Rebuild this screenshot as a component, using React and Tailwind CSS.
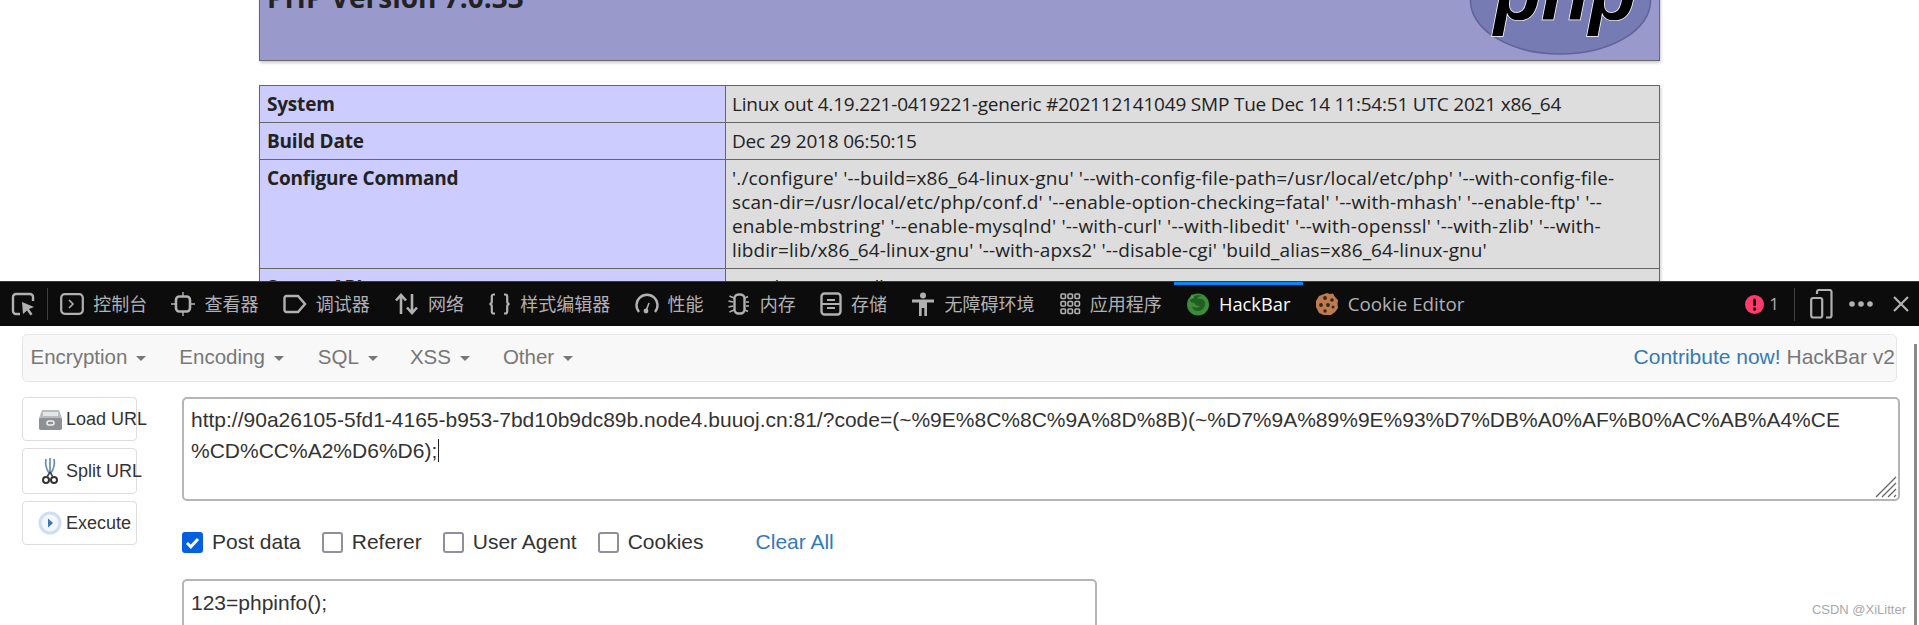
import { useState } from 'react'

const rows = [
  { k: 'System', v: [['Linux out 4.19.221-0419221-generic #202112141049 SMP Tue Dec 14 11:54:51 UTC 2021 x86_64', '']] },
  { k: 'Build Date', v: [['Dec 29 2018 06:50:15', '']] },
  {
    k: 'Configure Command',
    v: [
      ["'./configure' '--build=x86_64-linux-gnu' '--with-config-file-path=/usr/local/etc/php' '--with-config-file-", 'tracking-[0.16px]'],
      ["scan-dir=/usr/local/etc/php/conf.d' '--enable-option-checking=fatal' '--with-mhash' '--enable-ftp' '--", 'tracking-[0.13px]'],
      ["enable-mbstring' '--enable-mysqlnd' '--with-curl' '--with-libedit' '--with-openssl' '--with-zlib' '--with-", 'tracking-[0.2px]'],
      ["libdir=lib/x86_64-linux-gnu' '--with-apxs2' '--disable-cgi' 'build_alias=x86_64-linux-gnu'", 'tracking-[0.09px]'],
    ],
  },
  { k: 'Server API', v: [['Apache 2.0 Handler', '']] },
]

const Svg = ({ children, w = 24 }) => (
  <svg width={w} height="24" viewBox={`0 0 ${w} 24`} fill="none" stroke="#b1b1b3" strokeWidth="2.2" className="shrink-0">
    {children}
  </svg>
)

const tabIcons = {
  console: (
    <Svg>
      <rect x="1.2" y="2.2" width="21.6" height="19.6" rx="3.5" />
      <path d="M9 8l4 4-4 4" strokeWidth="1.6" />
    </Svg>
  ),
  inspector: (
    <Svg>
      <rect x="5" y="4.5" width="14" height="15" rx="3.5" strokeWidth="2.6" />
      <path d="M12 0v4.5M12 19.5V24M0 12h5M19 12h5" strokeWidth="1.4" />
    </Svg>
  ),
  debugger: (
    <Svg>
      <path d="M3.5 4h11.5l7 8-7 8H3.5a2 2 0 0 1-2-2V6a2 2 0 0 1 2-2z" strokeWidth="2.4" />
    </Svg>
  ),
  network: (
    <Svg w={25}>
      <path d="M7 22V3M2 8.5L7 3l5 5.5M18 2v19M13 15.5l5 5.5 5-5.5" strokeWidth="2.6" />
    </Svg>
  ),
  style: (
    <Svg w={23}>
      <path d="M7 2.5H5.8a2 2 0 0 0-2 2v5a2.5 2.5 0 0 1-2.3 2.5 2.5 2.5 0 0 1 2.3 2.5v5a2 2 0 0 0 2 2H7M16 2.5h1.2a2 2 0 0 1 2 2v5a2.5 2.5 0 0 0 2.3 2.5 2.5 2.5 0 0 0-2.3 2.5v5a2 2 0 0 1-2 2H16" strokeWidth="2.2" />
    </Svg>
  ),
  performance: (
    <Svg>
      <path d="M4 20A10.5 10.5 0 1 1 20 20" strokeWidth="2.4" />
      <circle cx="11" cy="19" r="2.4" fill="#b1b1b3" stroke="none" />
      <path d="M11 19l3-8" strokeWidth="1.6" />
    </Svg>
  ),
  memory: (
    <Svg w={23}>
      <rect x="6.5" y="2.5" width="10" height="19" rx="4" strokeWidth="2.4" />
      <path d="M6 6L1.5 4M5 10L.5 9M5 14l-4.500 1M6 18l-4.500 2M17 6l3 -1.500M18 10h3M18 14h3M17 18l3 1.500" strokeWidth="1.5" />
    </Svg>
  ),
  storage: (
    <Svg w={22}>
      <rect x="1.5" y="1.500" width="19" height="21" rx="3" strokeWidth="2.4" />
      <path d="M7 8h8M7 16h8M2 12h18" strokeWidth="2" />
    </Svg>
  ),
  accessibility: (
    <svg width="24" height="24" viewBox="0 0 24 24" fill="#b1b1b3" className="shrink-0">
      <circle cx="12" cy="3.400" r="3" />
      <path d="M1 7.500h22v3h-7V24h-2.700v-8h-2.600v8H8V10.500H1z" />
    </svg>
  ),
  apps: (
    <svg width="22" height="24" viewBox="0 0 22 24" fill="none" stroke="#b1b1b3" strokeWidth="1.6" className="shrink-0">
      {[2, 9, 16].map(x => [2, 9.500, 17].map(y => <rect key={`${x}-${y}`} x={x} y={y} width="4.500" height="4.500" rx="1" />))}
    </svg>
  ),
  hackbar: (
    <svg width="24" height="24" viewBox="0 0 24 24" className="shrink-0">
      <circle cx="12" cy="12.500" r="11" fill="#3d8b3a" />
      <path d="M4 9c2-5 8-7 12-5-3 0-5 2-5 3 3-1 7 0 8 3 1 5-3 9-7 9-3 0-6-2-6-5 2 2 6 2 8 0-3 0-5-1-6-3-2 0-3-1-4-2z" fill="#205f22" />
      <path d="M6 2l2 4-4 1z" fill="#4fa347" />
    </svg>
  ),
  cookie: (
    <svg width="24" height="24" viewBox="0 0 24 24" className="shrink-0">
      <path d="M12 1l3 1 3-.5 2 3.500 3 3-.5 4L23 16l-3 4-4 3H9l-5-2-3-6V9l3-5z" fill="#bd7b50" />
      <circle cx="10" cy="6" r="1.900" fill="#3a2419" />
      <circle cx="17" cy="8" r="1.800" fill="#3a2419" />
      <circle cx="6" cy="13" r="1.900" fill="#3a2419" />
      <circle cx="13" cy="13" r="1.900" fill="#3a2419" />
      <circle cx="18" cy="15" r="1.500" fill="#3a2419" />
      <circle cx="10" cy="19" r="1.700" fill="#3a2419" />
    </svg>
  ),
}

const tabs = [
  { id: 'console', label: '控制台' },
  { id: 'inspector', label: '查看器' },
  { id: 'debugger', label: '调试器' },
  { id: 'network', label: '网络' },
  { id: 'style', label: '样式编辑器' },
  { id: 'performance', label: '性能' },
  { id: 'memory', label: '内存' },
  { id: 'storage', label: '存储' },
  { id: 'accessibility', label: '无障碍环境' },
  { id: 'apps', label: '应用程序' },
  { id: 'hackbar', label: 'HackBar', cls: 'text-[18.3px]' },
  { id: 'cookie', label: 'Cookie Editor', cls: 'text-[18.8px]' },
]

const menus = [
  { name: 'Encryption', cls: 'mr-[33px]' },
  { name: 'Encoding', cls: 'mr-[34px]' },
  { name: 'SQL', cls: 'mr-[32px]' },
  { name: 'XSS', cls: 'mr-[33px]' },
  { name: 'Other', cls: '' },
]

const LoadIcon = () => (
  <svg width="25" height="24" viewBox="0 0 25 24" className="shrink-0">
    <path d="M4 3h17l3 8v10a2 2 0 0 1-2 2H3a2 2 0 0 1-2-2V11z" fill="#b9bcbf" />
    <rect x="1" y="11" width="23" height="12" rx="2" fill="#8e9194" />
    <rect x="5" y="5" width="15" height="4" fill="#e5e6e7" />
    <rect x="9" y="14" width="7" height="4" rx="2" fill="none" stroke="#eef0f1" strokeWidth="1.500" />
  </svg>
)

const SplitIcon = () => (
  <svg width="18" height="28" viewBox="0 0 18 28" fill="none" className="shrink-0">
    <path d="M5 2c-1 5 1 11 3 14M13 2c1 5-1 11-3 14M9 1v13" stroke="#6f93b8" strokeWidth="1.800" />
    <circle cx="5" cy="23" r="3" stroke="#333" strokeWidth="2" />
    <circle cx="13" cy="23" r="3" stroke="#333" strokeWidth="2" />
    <path d="M6 20l3-5 3 5" stroke="#444" strokeWidth="1.600" />
  </svg>
)

const ExecuteIcon = () => (
  <svg width="24" height="24" viewBox="0 0 24 24" className="shrink-0">
    <circle cx="12" cy="12" r="11.500" fill="#cfdff3" />
    <circle cx="12" cy="12" r="8.500" fill="#f3f7fc" />
    <path d="M10 7.500l5 4.500-5 4.500z" fill="#3f74b5" />
  </svg>
)

const actions = [
  { label: 'Load URL', icon: <LoadIcon />, cls: 'h-[44px] gap-[3px] pl-[15px]' },
  { label: 'Split URL', icon: <SplitIcon />, cls: 'h-[46px] gap-[7px] pl-[18px]' },
  { label: 'Execute', icon: <ExecuteIcon />, cls: 'h-[44px] gap-[4px] pl-[15px]' },
]

function Check({ label, on, setOn, cls }) {
  return (
    <label className={`flex items-center gap-[9px] ${cls}`}>
      <input type="checkbox" checked={on} onChange={() => setOn(!on)} className="sr-only" />
      {on ? (
        <svg width="21" height="21" viewBox="0 0 21 21" className="shrink-0">
          <rect width="21" height="21" rx="3" fill="#0060df" />
          <path d="M5 11l3.800 3.800L16 7" fill="none" stroke="#fff" strokeWidth="3" />
        </svg>
      ) : (
        <span className="h-[21px] w-[21px] shrink-0 rounded-[3px] border-[2.5px] border-[#8f8f9d] bg-white" />
      )}
      <span className="-mt-[2px]">{label}</span>
    </label>
  )
}

export default function App() {
  const [post, setPost] = useState(true)
  const [referer, setReferer] = useState(false)
  const [agent, setAgent] = useState(false)
  const [cookies, setCookies] = useState(false)

  return (
    <div className="relative flex h-[625px] flex-col overflow-hidden bg-white">
      {/* phpinfo page behind the devtools */}
      <div className="h-[281px] shrink-0 overflow-hidden font-['Open_Sans','Noto_Sans',sans-serif] text-[19px] leading-[24px] tracking-[-0.2px] text-[#222]">
        <div className="ml-[259px] w-[1401px]">
          <div className="relative -mt-[60px] flex h-[121px] justify-between border border-[#666] bg-[#9999cc] pl-[7px] shadow-[1px_2px_3px_#ccc]">
            <h1 className="mt-[38px] text-[28px] font-bold leading-[36px] tracking-normal">PHP Version 7.0.33</h1>
            <svg width="192" height="120" viewBox="0 0 192 120" className="mr-[5px] shrink-0">
              <ellipse cx="98.500" cy="60" rx="90" ry="53" fill="#777bb3" stroke="#5f6399" strokeWidth="1.500" />
              <text x="103" y="79" textAnchor="middle" fontFamily="'Liberation Sans',sans-serif" fontStyle="italic" fontWeight="700" fontSize="78" fill="#000" stroke="#fff" strokeWidth="1.500" paintOrder="stroke">php</text>
            </svg>
          </div>
          <table className="mt-[24px] w-full table-fixed border-collapse shadow-[1px_2px_3px_#ccc]">
            <colgroup>
              <col className="w-[466px]" />
              <col />
            </colgroup>
            <tbody>
              {rows.map(r => (
                <tr key={r.k}>
                  <td className="border border-[#666] bg-[#ccccff] px-[7px] py-[6px] align-top font-bold">{r.k}</td>
                  <td className="border border-[#666] bg-[#dddddd] px-[6px] py-[6px] align-top">
                    {r.v.map(([line, cls]) => <div key={line} className={`whitespace-nowrap ${cls}`}>{line}</div>)}
                  </td>
                </tr>
              ))}
            </tbody>
          </table>
        </div>
      </div>

      {/* devtools toolbar */}
      <div className="flex h-[45px] shrink-0 items-stretch border-t border-[#3a3a3c] bg-[#0c0c0d] font-['Open_Sans','Noto_Sans_CJK_SC',sans-serif] text-[18px] text-[#b1b1b3]">
        <div className="flex w-[47px] items-center justify-end pr-[12px]">
          <svg width="24" height="24" viewBox="0 0 24 24" fill="none" className="shrink-0">
            <path d="M9 22H5a3 3 0 0 1-3-3V5a3 3 0 0 1 3-3h14a3 3 0 0 1 3 3v4" stroke="#b1b1b3" strokeWidth="2.400" />
            <path d="M11 10l12 5-5 2 3.500 5-2 1.500-3.500-5L12 22z" fill="#b1b1b3" />
          </svg>
        </div>
        <div className="my-[6px] w-px bg-[#3f3f42]" />
        {tabs.map(t => {
          const active = t.id === 'hackbar'
          return (
            <div key={t.id} className={`relative flex items-center gap-[9px] px-[12.15px] leading-none ${active ? 'text-white' : ''}`}>
              {active && <span className="absolute inset-x-0 top-0 h-[3px] bg-[#0a84ff]" />}
              {tabIcons[t.id]}
              <span className={`whitespace-nowrap ${t.cls || ''}`}>{t.label}</span>
            </div>
          )
        })}
        <div className="ml-auto flex items-center">
          <svg width="19" height="19" viewBox="0 0 19 19" className="shrink-0">
            <circle cx="9.500" cy="9.500" r="9.500" fill="#ff3b6b" />
            <rect x="8" y="3.500" width="3" height="7.500" rx="1.500" fill="#0c0c0d" />
            <circle cx="9.500" cy="14" r="1.700" fill="#0c0c0d" />
          </svg>
          <span className="ml-[5px] text-[17px]">1</span>
          <div className="ml-[15px] h-[33px] w-px bg-[#3f3f42]" />
          <svg width="23" height="30" viewBox="0 0 23 30" fill="none" stroke="#b1b1b3" strokeWidth="2.200" className="ml-[15px] shrink-0">
            <rect x="1.200" y="9" width="11" height="19.500" rx="2" />
            <path d="M7 5V3a2 2 0 0 1 2-2h10.500a2 2 0 0 1 2 2v23.500a2 2 0 0 1-2 2H16" />
          </svg>
          <svg width="24" height="6" viewBox="0 0 24 6" fill="#b1b1b3" className="ml-[16px] shrink-0">
            <circle cx="3" cy="3" r="2.800" />
            <circle cx="12" cy="3" r="2.800" />
            <circle cx="21" cy="3" r="2.800" />
          </svg>
          <svg width="16" height="16" viewBox="0 0 16 16" stroke="#b1b1b3" strokeWidth="2.200" className="ml-[20px] mr-[10px] shrink-0">
            <path d="M1 1l14 14M15 1L1 15" />
          </svg>
        </div>
      </div>

      {/* hackbar panel */}
      <div className="flex-1 pl-[22px] pr-[19px] pt-[8px] font-['Liberation_Sans',sans-serif] text-[21px] text-[#333]">
        <div className="mr-[3px] flex h-[48px] items-center justify-between rounded-[5px] border border-[#e7e7e7] bg-[#f8f8f8] pb-[2px] pl-[7.500px] pr-[1px] text-[#777]">
          <div className="flex items-center text-[20.5px]">
            {menus.map(m => (
              <div key={m.name} className={`flex items-center gap-[9px] ${m.cls}`}>
                <span>{m.name}</span>
                <span className="mt-[2px] border-x-[5px] border-t-[5px] border-x-transparent border-t-[#777]" />
              </div>
            ))}
          </div>
          <div>
            <span className="text-[#337ab7]">Contribute now!</span> HackBar v2
          </div>
        </div>

        <div className="mt-[15px] flex items-start gap-[45px]">
          <div className="flex w-[115px] shrink-0 flex-col gap-[7px]">
            {actions.map(a => (
              <button key={a.label} className={`flex items-center rounded-[4px] border border-[#ddd] bg-white text-[18px] whitespace-nowrap ${a.cls}`}>
                {a.icon}
                <span>{a.label}</span>
              </button>
            ))}
          </div>
          <div className="min-w-0 flex-1">
            <div className="relative h-[104px] rounded-[5px] border-2 border-[#b5b5b5] px-[7px] py-[5px] leading-[31px] whitespace-nowrap">
              <div>http://90a26105-5fd1-4165-b953-7bd10b9dc89b.node4.buuoj.cn:81/?code=(~%9E%8C%8C%9A%8D%8B)(~%D7%9A%89%9E%93%D7%DB%A0%AF%B0%AC%AB%A4%CE</div>
              <div>
                %CD%CC%A2%D6%D6);<span className="ml-[1px] inline-block h-[23px] w-px translate-y-[4px] bg-[#222]" />
              </div>
              <svg width="22" height="22" viewBox="0 0 22 22" stroke="#666" strokeWidth="1.300" className="absolute bottom-[1px] right-[1px]">
                <path d="M1 21L21 1M7 21L21 7M13 21l8-8M19 21l2-2" />
              </svg>
            </div>
            <div className="mt-[31px] flex h-[21px] items-center">
              <Check label="Post data" on={post} setOn={setPost} />
              <Check label="Referer" on={referer} setOn={setReferer} cls="ml-[21px]" />
              <Check label="User Agent" on={agent} setOn={setAgent} cls="ml-[21px]" />
              <Check label="Cookies" on={cookies} setOn={setCookies} cls="ml-[21px]" />
              <span className="-mt-[2px] ml-[52px] text-[#337ab7]">Clear All</span>
            </div>
            <div className="mt-[26px] h-[104px] w-[915px] rounded-[5px] border-2 border-[#b5b5b5] px-[7px] py-[6px] leading-[31px]">123=phpinfo();</div>
          </div>
        </div>
      </div>

      {/* scrollbar + watermark sit over the panel */}
      <div className="absolute right-[2px] top-[344px] bottom-0 w-[3px] bg-[#8a8a8a]" />
      <div className="absolute bottom-[6px] right-[13px] font-['Liberation_Sans',sans-serif] text-[13px] text-[#a8a8a8]">CSDN @XiLitter</div>
    </div>
  )
}
